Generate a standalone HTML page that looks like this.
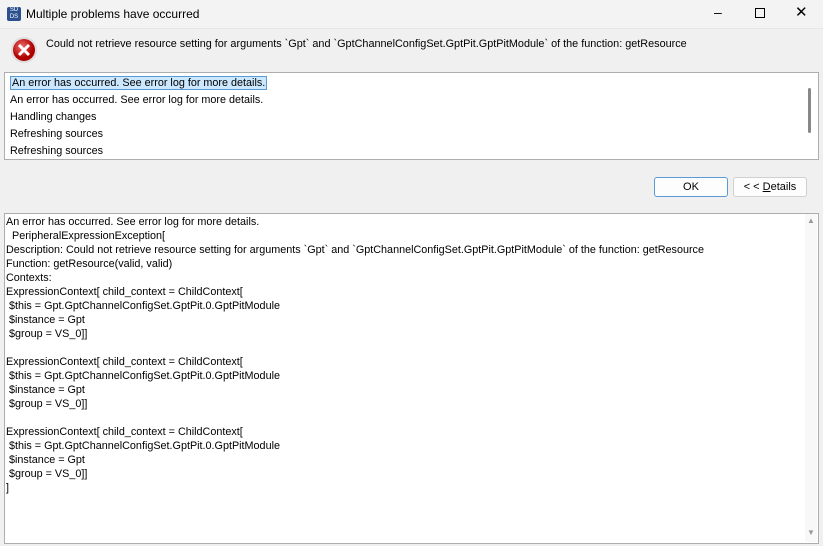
<html><head><style>
body{margin:0;width:823px;height:546px;background:#f0f0f0;font-family:"Liberation Sans",sans-serif;font-size:10.8px;color:#000;position:relative;overflow:hidden}
.a{position:absolute}
.list div{height:17px;line-height:17px;padding-left:5px;white-space:nowrap}
.btn{position:absolute;height:18px;line-height:18px;text-align:center;background:#fdfdfd;border:1px solid #d0d0d0;border-radius:3px;font-size:11px}
pre{margin:0;font-family:"Liberation Sans",sans-serif;font-size:10.8px;line-height:14px}
</style></head><body>
<div class="a" style="left:0;top:0;width:823px;height:28px;background:#f3f3f3"></div>
<div class="a" style="left:7px;top:7px;width:14px;height:14px;background:#2c4f8f;border-radius:2px;color:#fff;font-size:6px;line-height:7px;text-align:center">SD<br>DS</div>
<div class="a" style="left:26px;top:7px;font-size:12px">Multiple problems have occurred</div>
<div class="a" style="left:714px;top:4px;font-size:14px">&#8211;</div>
<div class="a" style="left:755px;top:8px;width:8px;height:8px;border:1px solid #000"></div>
<div class="a" style="left:795px;top:3px;font-size:15px">&#10005;</div>
<div class="a" style="left:0;top:28px;width:823px;height:1px;background:#e6e6e6"></div>
<svg class="a" style="left:10px;top:36px" width="28" height="28"><defs><radialGradient id="g" cx="40%" cy="35%"><stop offset="0" stop-color="#f07070"/><stop offset="1" stop-color="#b00000"/></radialGradient></defs><circle cx="14" cy="14" r="13" fill="#ddd"/><circle cx="14" cy="14" r="11" fill="url(#g)"/><path d="M9 9L19 19M19 9L9 19" stroke="#fff" stroke-width="3"/></svg>
<div class="a" style="left:46px;top:38px;font-size:10.85px">Could not retrieve resource setting for arguments `Gpt` and `GptChannelConfigSet.GptPit.GptPitModule` of the function: getResource</div>
<div class="a list" style="left:4px;top:72px;width:813px;height:86px;background:#fff;border:1px solid #adadad">
<div style="padding-top:3px;height:15px;line-height:15px"><span style="background:#cce8ff;border:1px solid #5b9bd5;padding:0 1px">An error has occurred. See error log for more details.</span></div>
<div style="margin-top:1px">An error has occurred. See error log for more details.</div>
<div>Handling changes</div>
<div>Refreshing sources</div>
<div>Refreshing sources</div>
</div>
<div class="a" style="left:808px;top:88px;width:3px;height:45px;background:#888;border-radius:2px"></div>
<div class="btn" style="left:654px;top:177px;width:72px;border-color:#5b9bd5">OK</div>
<div class="btn" style="left:733px;top:177px;width:72px">&lt; &lt; <u>D</u>etails</div>
<div class="a" style="left:4px;top:213px;width:813px;height:329px;background:#fff;border:1px solid #adadad"></div>
<div class="a" style="left:805px;top:214px;width:12px;height:328px;background:#f8f8f8"></div>
<div class="a" style="left:807px;top:216px;font-size:8px;color:#999">&#9650;</div>
<div class="a" style="left:807px;top:528px;font-size:8px;color:#999">&#9660;</div>
<pre class="a" style="left:6px;top:215px">An error has occurred. See error log for more details.
  PeripheralExpressionException[
Description: Could not retrieve resource setting for arguments `Gpt` and `GptChannelConfigSet.GptPit.GptPitModule` of the function: getResource
Function: getResource(valid, valid)
Contexts:
ExpressionContext[ child_context = ChildContext[
 $this = Gpt.GptChannelConfigSet.GptPit.0.GptPitModule
 $instance = Gpt
 $group = VS_0]]

ExpressionContext[ child_context = ChildContext[
 $this = Gpt.GptChannelConfigSet.GptPit.0.GptPitModule
 $instance = Gpt
 $group = VS_0]]

ExpressionContext[ child_context = ChildContext[
 $this = Gpt.GptChannelConfigSet.GptPit.0.GptPitModule
 $instance = Gpt
 $group = VS_0]]
]</pre>
</body></html>
